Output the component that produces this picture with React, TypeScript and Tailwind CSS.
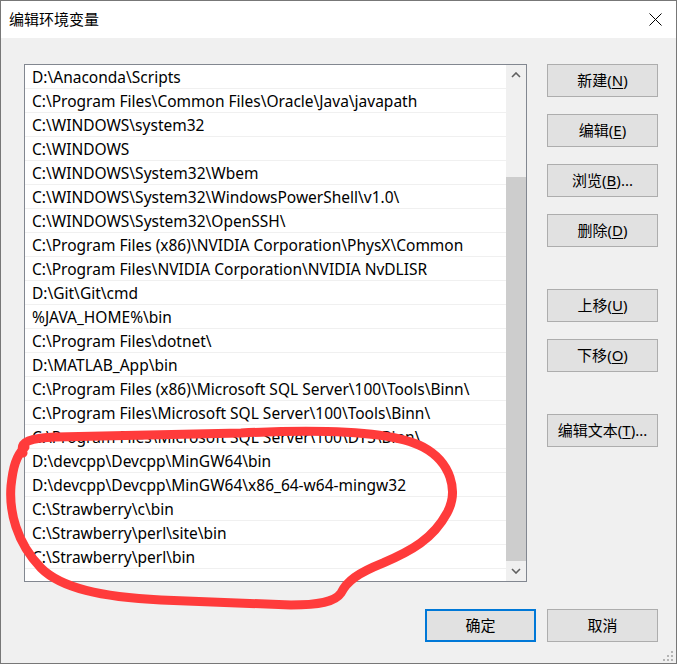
import React from "react";

const paths = [
  "D:\\Anaconda\\Scripts",
  "C:\\Program Files\\Common Files\\Oracle\\Java\\javapath",
  "C:\\WINDOWS\\system32",
  "C:\\WINDOWS",
  "C:\\WINDOWS\\System32\\Wbem",
  "C:\\WINDOWS\\System32\\WindowsPowerShell\\v1.0\\",
  "C:\\WINDOWS\\System32\\OpenSSH\\",
  "C:\\Program Files (x86)\\NVIDIA Corporation\\PhysX\\Common",
  "C:\\Program Files\\NVIDIA Corporation\\NVIDIA NvDLISR",
  "D:\\Git\\Git\\cmd",
  "%JAVA_HOME%\\bin",
  "C:\\Program Files\\dotnet\\",
  "D:\\MATLAB_App\\bin",
  "C:\\Program Files (x86)\\Microsoft SQL Server\\100\\Tools\\Binn\\",
  "C:\\Program Files\\Microsoft SQL Server\\100\\Tools\\Binn\\",
  "C:\\Program Files\\Microsoft SQL Server\\100\\DTS\\Binn\\",
  "D:\\devcpp\\Devcpp\\MinGW64\\bin",
  "D:\\devcpp\\Devcpp\\MinGW64\\x86_64-w64-mingw32",
  "C:\\Strawberry\\c\\bin",
  "C:\\Strawberry\\perl\\site\\bin",
  "C:\\Strawberry\\perl\\bin",
];

const font = { fontFamily: '"Noto Sans", "Noto Sans CJK SC", sans-serif' };

function Btn({
  label,
  keyChar,
  suffix = "",
  primary = false,
}: {
  label: string;
  keyChar?: string;
  suffix?: string;
  primary?: boolean;
}) {
  return (
    <div
      className={
        primary
          ? "w-[111px] h-[33px] bg-[#e1e1e1] border-2 border-[#0078d7] flex items-center justify-center text-[15px] text-black"
          : "w-[111px] h-[33px] bg-[#e1e1e1] border border-[#adadad] flex items-center justify-center text-[15px] text-black"
      }
    >
      <span>
        {label}
        {keyChar ? (
          <>
            (<span className="underline underline-offset-2">{keyChar}</span>)
          </>
        ) : null}
        {suffix}
      </span>
    </div>
  );
}

function Chevron({ up }: { up: boolean }) {
  return (
    <svg width="10" height="6" viewBox="0 0 10 6">
      <path
        d={up ? "M1 5 L5 1 L9 5" : "M1 1 L5 5 L9 1"}
        fill="none"
        stroke="#606060"
        strokeWidth="1.6"
      />
    </svg>
  );
}

export default function App() {
  return (
    <div
      className="relative w-[677px] h-[664px] border border-[#777777] flex flex-col bg-[#f0f0f0] overflow-hidden"
      style={font}
    >
      {/* title bar */}
      <div className="h-[37px] bg-white flex items-center justify-between pl-[8px] pr-[14px]">
        <span className="text-[15px] text-black leading-none">编辑环境变量</span>
        <svg width="13" height="13" viewBox="0 0 13 13">
          <path d="M0.5 0.5 L12.5 12.5 M12.5 0.5 L0.5 12.5" stroke="#000" strokeWidth="1" />
        </svg>
      </div>

      {/* body */}
      <div className="flex-1 flex flex-col pl-[23px] pr-[18px] pt-[26px]">
        <div className="flex gap-[20px]">
          {/* path list */}
          <div className="w-[504px] h-[518px] bg-white border border-[#828790] flex">
            <div className="flex-1 flex flex-col">
              {paths.map((p) => (
                <div
                  key={p}
                  className="h-[24px] border-b border-[#f0f0f0] pl-[7px] pt-[2px] flex items-center text-[15.5px] text-black whitespace-nowrap overflow-hidden"
                >
                  {p}
                </div>
              ))}
            </div>
            {/* vertical scrollbar */}
            <div className="w-[20px] bg-[#f0f0f0] flex flex-col">
              <div className="h-[20px] flex items-center justify-center">
                <Chevron up />
              </div>
              <div className="h-[92px]" />
              <div className="flex-1 bg-[#cdcdcd]" />
              <div className="h-[20px] flex items-center justify-center">
                <Chevron up={false} />
              </div>
            </div>
          </div>

          {/* action buttons */}
          <div className="flex flex-col">
            <div className="flex flex-col gap-[17px]">
              <Btn label="新建" keyChar="N" />
              <Btn label="编辑" keyChar="E" />
              <Btn label="浏览" keyChar="B" suffix="..." />
              <Btn label="删除" keyChar="D" />
            </div>
            <div className="flex flex-col gap-[17px] mt-[42px]">
              <Btn label="上移" keyChar="U" />
              <Btn label="下移" keyChar="O" />
            </div>
            <div className="mt-[42px]">
              <Btn label="编辑文本" keyChar="T" suffix="..." />
            </div>
          </div>
        </div>

        {/* dialog buttons */}
        <div className="flex justify-end gap-[11px] mt-[27px]">
          <Btn label="确定" primary />
          <Btn label="取消" />
        </div>
      </div>

      {/* resize grip */}
      <svg className="absolute right-[2px] bottom-[1px]" width="11" height="11" viewBox="0 0 11 11">
        <rect x="8" y="0" width="2" height="2" fill="#b4b4b4" />
        <rect x="4" y="4" width="2" height="2" fill="#b4b4b4" />
        <rect x="8" y="4" width="2" height="2" fill="#b4b4b4" />
        <rect x="0" y="8" width="2" height="2" fill="#b4b4b4" />
        <rect x="4" y="8" width="2" height="2" fill="#b4b4b4" />
        <rect x="8" y="8" width="2" height="2" fill="#b4b4b4" />
      </svg>

      {/* hand-drawn highlight ring */}
      <svg className="absolute left-0 top-0 pointer-events-none" width="677" height="664" viewBox="0 0 677 664">
        <path
          d="M22 452 C18 440 30 437 55 436 L240 432 C320 428 392 430 422 446 C450 461 458 490 446 512 C432 538 410 550 382 562 C357 572 346 580 340 592 C334 601 318 604 290 604 L160 599 C100 596 60 587 40 567 C15 541 8 510 10 485 C12 466 15 455 24 446"
          fill="none"
          stroke="#ff3b3b"
          strokeWidth="9"
          strokeLinecap="round"
          strokeLinejoin="round"
        />
      </svg>
    </div>
  );
}
